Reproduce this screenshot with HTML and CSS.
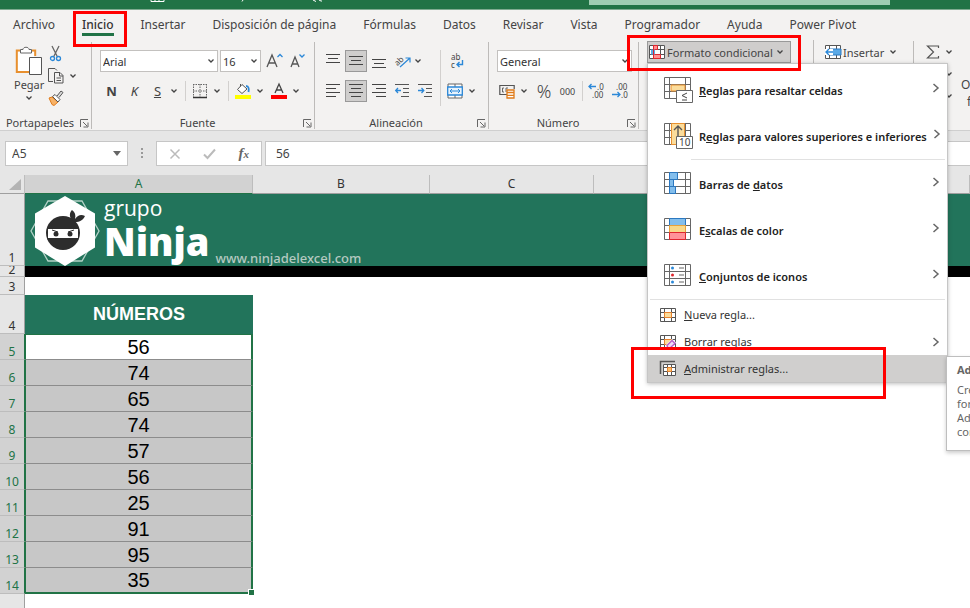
FILE: index.html
```html
<!DOCTYPE html>
<html lang="es">
<head>
    <meta charset="UTF-8">
    <meta name="viewport" content="width=device-width, initial-scale=1.0">
    <title>Administrar reglas - Excel</title>
    <link rel="stylesheet" href="styles.css">
</head>
<body>

<!-- Iconos compartidos -->
<svg class="defs" width="0" height="0">
    <symbol id="chev" viewBox="0 0 10 8"><path d="M2.5 2.5L5 5l2.5-2.5" fill="none" stroke="#444" stroke-width="1.3"/></symbol>
    <symbol id="arrow" viewBox="0 0 8 12"><path d="M1.5 2L6 6l-4.500 4" fill="none" stroke="#666" stroke-width="1.5"/></symbol>
    <symbol id="launch" viewBox="0 0 9 9"><path d="M.5 8V.5H8M3 3l4 4M8 3.500V8H3.500" fill="none" stroke="#666"/></symbol>
    <symbol id="grid-lg" viewBox="0 0 28 22"><path d="M.5.5h26v21H.5zM.5 7.500h26M.5 14.500h26M5.500.5v21M21.500.5v21" fill="none" stroke="#666"/></symbol>
    <symbol id="grid-sm" viewBox="0 0 16 14"><path d="M.5.5h15v13H.5zM.5 4.500h15M.5 9.500h15M4.500.5v13M11.500.5v13" fill="none" stroke="#555"/></symbol>
</svg>

<div class="app">
    <header class="titlebar">
        <svg class="quick" width="340" height="4" viewBox="0 0 340 4"><path d="M11 0v1.500h13V0M15 0v1.500M19 0v1.500M103 0l-1 1.500M173 0l3 1.500M179 0l2 1h1" fill="none" stroke="#fff"/></svg>
        <div class="search"></div>
    </header>

    <nav class="tabs">
        <a href="#">Archivo</a>
        <a href="#" class="active">Inicio</a>
        <a href="#">Insertar</a>
        <a href="#">Disposición de página</a>
        <a href="#">Fórmulas</a>
        <a href="#">Datos</a>
        <a href="#">Revisar</a>
        <a href="#">Vista</a>
        <a href="#">Programador</a>
        <a href="#">Ayuda</a>
        <a href="#">Power Pivot</a>
    </nav>

    <div class="ribbon">
        <!-- Portapapeles -->
        <section class="group clipboard">
            <div class="tools">
                <button class="paste">
                    <svg width="28" height="30" viewBox="0 0 28 30"><path d="M5 4.500H1.800V26H15" fill="none" stroke="#e8902e" stroke-width="2"/><path d="M17 4.500h3.200V10" fill="none" stroke="#e8902e" stroke-width="2"/><path d="M3 6h16v5h-5v14H3z" fill="#fff"/><path d="M5.500 7V3.500H8C8 .5 14 .5 14 3.500h2.500V7z" fill="#fff" stroke="#666"/><path d="M14.500 11.500h12v17h-12z" fill="#fff" stroke="#555"/></svg>
                    <span>Pegar</span>
                    <svg width="10" height="8"><use href="#chev"/></svg>
                </button>
                <div class="small-tools">
                    <button class="cut" aria-label="Cortar"><svg width="16" height="16" viewBox="0 0 16 16"><path d="M4 0l5.500 11M11 0L5.500 11" fill="none" stroke="#666" stroke-width="1.300"/><circle cx="4.500" cy="12.500" r="2" fill="none" stroke="#2b88d8" stroke-width="1.300"/><circle cx="10.500" cy="12.500" r="2" fill="none" stroke="#2b88d8" stroke-width="1.300"/></svg></button>
                    <button aria-label="Copiar"><svg width="16" height="16" viewBox="0 0 16 16"><path d="M5 13.500H.5V.5H7l2 2M6.500 4.500H12l3 3v7.500H6.500zM11.500 4.500V8H15M8.500 10h4.500M8.500 12.500h4.500" fill="none" stroke="#555"/></svg><svg width="10" height="8"><use href="#chev"/></svg></button>
                    <button aria-label="Copiar formato"><svg width="16" height="16" viewBox="0 0 16 16"><path d="M1 8l3-1 6 5-4 3.500-2-1z" fill="#f7b267" stroke="#e07b1a"/><path d="M4.500 6.500L7 4.500l5 5-2 2.500z" fill="#fff" stroke="#555"/><path d="M9 6l4-5 2 1.500-4 5" fill="#ddd" stroke="#555"/></svg></button>
                </div>
            </div>
            <div class="caption"><span>Portapapeles</span><svg width="9" height="9"><use href="#launch"/></svg></div>
        </section>

        <!-- Fuente -->
        <section class="group font">
            <div class="tools rows">
                <div class="row">
                    <div class="combo family"><select aria-label="Fuente"><option>Arial</option></select><svg width="10" height="8"><use href="#chev"/></svg></div>
                    <div class="combo size"><select aria-label="Tamaño"><option>16</option></select><svg width="10" height="8"><use href="#chev"/></svg></div>
                    <button class="icon" aria-label="Aumentar fuente"><svg width="17" height="16" viewBox="0 0 17 16"><path d="M1 14L6 2l5 12M2.800 10h6.500" fill="none" stroke="#555" stroke-width="1.300"/><path d="M11.500 4L14 1.500 16.500 4" fill="none" stroke="#2b88d8" stroke-width="1.300"/></svg></button>
                    <button class="icon" aria-label="Reducir fuente"><svg width="17" height="16" viewBox="0 0 17 16"><path d="M1 14L5 4l4 10M2.300 11h5.500" fill="none" stroke="#555" stroke-width="1.300"/><path d="M9.500 1.500L12 4l2.500-2.500" fill="none" stroke="#2b88d8" stroke-width="1.300"/></svg></button>
                </div>
                <div class="row style-row">
                    <button class="letter"><b>N</b></button>
                    <button class="letter"><i>K</i></button>
                    <button class="letter"><u>S</u></button>
                    <button class="drop" aria-label="Tipo de subrayado"><svg width="10" height="8"><use href="#chev"/></svg></button>
                    <span class="bar"></span>
                    <button class="split" aria-label="Bordes"><svg width="16" height="16" viewBox="0 0 16 16"><path d="M1 1.500h14M1 8h14M1.500 1v13M8 1v13M14.500 1v13" fill="none" stroke="#666" stroke-dasharray="1.500 1"/><path d="M1 14.500h14" stroke="#333" stroke-width="1.500"/></svg><svg width="10" height="8"><use href="#chev"/></svg></button>
                    <span class="bar"></span>
                    <button class="split" aria-label="Color de relleno"><svg width="16" height="16" viewBox="0 0 16 16"><path d="M2.500 6.500L7 1.500l5 4.500-5 4.500z" fill="#fff" stroke="#555"/><path d="M5.500 3.500V1" stroke="#555"/><path d="M11 3c3 0 3 3 2.500 6" fill="none" stroke="#2b88d8" stroke-width="1.800"/><path d="M0 12h16v4H0z" fill="#ff0"/></svg><svg width="10" height="8"><use href="#chev"/></svg></button>
                    <button class="split" aria-label="Color de fuente"><svg width="16" height="16" viewBox="0 0 16 16"><path d="M4 10L8 1l4 9M5.300 7h5.500" fill="none" stroke="#444" stroke-width="1.300"/><path d="M0 12h16v4H0z" fill="#f00"/></svg><svg width="10" height="8"><use href="#chev"/></svg></button>
                </div>
            </div>
            <div class="caption"><span>Fuente</span><svg width="9" height="9"><use href="#launch"/></svg></div>
        </section>

        <!-- Alineación -->
        <section class="group align">
            <div class="tools">
                <div class="rows">
                    <div class="row">
                        <button class="icon" aria-label="Alinear arriba"><svg width="14" height="14" viewBox="0 0 14 14"><path d="M0 .5h14M2 4.500h10M0 8.500h14" stroke="#444"/></svg></button>
                        <button class="icon on" aria-label="Alinear en el medio"><svg width="14" height="14" viewBox="0 0 14 14"><path d="M0 2.500h14M2 6.500h10M0 10.500h14" stroke="#444"/></svg></button>
                        <button class="icon" aria-label="Alinear abajo"><svg width="14" height="14" viewBox="0 0 14 14"><path d="M0 5.500h14M2 9.500h10M0 13.500h14" stroke="#444"/></svg></button>
                        <button class="split orient" aria-label="Orientación"><svg width="17" height="16" viewBox="0 0 17 16"><text x="-1" y="9" transform="rotate(-45 6 7)" class="tiny">ab</text><path d="M5 14L15 5M10.500 5H15v4.500" fill="none" stroke="#2b88d8" stroke-width="1.200"/></svg><svg width="10" height="8"><use href="#chev"/></svg></button>
                    </div>
                    <div class="row">
                        <button class="icon" aria-label="Alinear a la izquierda"><svg width="14" height="14" viewBox="0 0 14 14"><path d="M0 .5h14M0 4.500h10M0 8.500h14M0 12.500h10" stroke="#444"/></svg></button>
                        <button class="icon on" aria-label="Centrar"><svg width="14" height="14" viewBox="0 0 14 14"><path d="M0 .5h14M2 4.500h10M0 8.500h14M2 12.500h10" stroke="#444"/></svg></button>
                        <button class="icon" aria-label="Alinear a la derecha"><svg width="14" height="14" viewBox="0 0 14 14"><path d="M0 .5h14M4 4.500h10M0 8.500h14M4 12.500h10" stroke="#444"/></svg></button>
                        <button class="icon" aria-label="Disminuir sangría"><svg width="14" height="14" viewBox="0 0 14 14"><path d="M0 .5h14M8 4.500h6M8 8.500h6M6 12.500h8" stroke="#555"/><path d="M6 6.500H1M3 4L.700 6.500 3 9" fill="none" stroke="#2b88d8" stroke-width="1.300"/></svg></button>
                        <button class="icon" aria-label="Aumentar sangría"><svg width="14" height="14" viewBox="0 0 14 14"><path d="M0 .5h14M8 4.500h6M8 8.500h6M6 12.500h8" stroke="#555"/><path d="M0 6.500h5.500M3.500 4l2.300 2.500L3.500 9" fill="none" stroke="#2b88d8" stroke-width="1.300"/></svg></button>
                    </div>
                </div>
                <span class="bar tall"></span>
                <div class="rows">
                    <div class="row"><button class="icon" aria-label="Ajustar texto"><svg width="15" height="18" viewBox="0 0 15 18"><text x="2" y="8" class="tiny">ab</text><text x="2" y="16" class="tiny">c</text><path d="M13.500 8v4.500H8M10.500 10L8 12.500l2.500 2.500" fill="none" stroke="#2b88d8" stroke-width="1.400"/></svg></button></div>
                    <div class="row"><button class="split merge" aria-label="Combinar y centrar"><svg width="16" height="16" viewBox="0 0 16 16"><path d="M1 1h14v14H1z" fill="#fff" stroke="#666"/><path d="M8 1v3M8 12v3" stroke="#666"/><path d="M.7 4h14.600v8H.7z" fill="#e8f3fc" stroke="#2b88d8" stroke-width="1.300"/><path d="M3.500 8h9M5 6L3 8l2 2M11 6l2 2-2 2" fill="none" stroke="#2b88d8"/></svg><svg width="10" height="8"><use href="#chev"/></svg></button></div>
                </div>
            </div>
            <div class="caption"><span>Alineación</span><svg width="9" height="9"><use href="#launch"/></svg></div>
        </section>

        <!-- Número -->
        <section class="group number">
            <div class="tools rows">
                <div class="row">
                    <div class="combo format"><select aria-label="Formato de número"><option>General</option></select><svg width="10" height="8"><use href="#chev"/></svg></div>
                </div>
                <div class="row number-row">
                    <button class="split" aria-label="Formato de contabilidad"><svg width="16" height="16" viewBox="0 0 16 16"><path d="M8 11.500H.8V2.500h14.400V6" fill="none" stroke="#555" stroke-width="1.200"/><path d="M5 5H3.500v4H5M9 5H7v4" fill="none" stroke="#666"/><path d="M8 7h7v8H8z" fill="#fff" stroke="#e07b1a" stroke-width="1.300"/><path d="M8 9.500h7M8 12.300h7" stroke="#e07b1a" stroke-width="1.300"/></svg><svg width="10" height="8"><use href="#chev"/></svg></button>
                    <button class="percent">%</button>
                    <button class="zeros">000</button>
                    <span class="bar"></span>
                    <button class="dec" aria-label="Aumentar decimales"><svg width="17" height="18" viewBox="0 0 17 18"><text x="8" y="8" class="tiny">.0</text><text x="3" y="16" class="tiny">.00</text><path d="M7 4.500H0M2.500 2L0 4.500 2.500 7" fill="none" stroke="#2b88d8" stroke-width="1.300"/></svg></button>
                    <button class="dec" aria-label="Disminuir decimales"><svg width="17" height="18" viewBox="0 0 17 18"><text x="4" y="8" class="tiny">.00</text><text x="9" y="16" class="tiny">.0</text><path d="M0 12.500h8M5.500 10L8 12.500 5.500 15" fill="none" stroke="#2b88d8" stroke-width="1.300"/></svg></button>
                </div>
            </div>
            <div class="caption"><span>Número</span><svg width="9" height="9"><use href="#launch"/></svg></div>
        </section>

        <!-- Estilos -->
        <section class="group styles">
            <div class="menu-anchor">
                <button class="cond">
                    <svg width="16" height="14" viewBox="0 0 16 14"><path d="M0 0h16v14H0z" fill="#fff"/><use href="#grid-sm" width="16" height="14"/><path d="M4.500.5h4v4h-4zM4.500 9.500h7v4h-7z" fill="#ff9090" stroke="#e0262e"/><path d="M2 4.500h4v5H2z" fill="#5aa9e6"/><path d="M4.500 0v14" stroke="#e0262e"/></svg>
                    Formato condicional
                    <svg width="10" height="8"><use href="#chev"/></svg>
                </button>

                <div class="menu">
                    <button class="item large">
                        <svg width="29" height="27" viewBox="0 0 29 27"><use href="#grid-lg" width="28" height="22"/><path d="M7 8h14v6H7z" fill="#fbdc9b" stroke="#e8902e"/><path d="M12.500 13.500h16v12h-16z" fill="#fff" stroke="#666"/><path d="M23 16l-5 2.500 5 2.500M18 23h5" fill="none" stroke="#444"/></svg>
                        <span><u>R</u>eglas para resaltar celdas</span>
                        <svg class="more" width="8" height="12"><use href="#arrow"/></svg>
                    </button>
                    <button class="item large">
                        <svg width="29" height="27" viewBox="0 0 29 27"><use href="#grid-lg" width="28" height="22"/><path d="M7.500.5h13v21h-13z" fill="#fbdc9b" stroke="#e8902e"/><path d="M14 14V3M10 7l4-4 4 4" fill="none" stroke="#555" stroke-width="1.400"/><path d="M12.500 13.500h16v12h-16z" fill="#fff" stroke="#666"/><text x="15" y="23" class="ten">10</text></svg>
                        <span>R<u>e</u>glas para valores superiores e inferiores</span>
                        <svg class="more" width="8" height="12"><use href="#arrow"/></svg>
                    </button>
                    <hr class="indent">
                    <button class="item large">
                        <svg width="29" height="27" viewBox="0 0 29 27"><use href="#grid-lg" y="1" width="28" height="22"/><path d="M5.500 1.500h8v7h-8zM5.500 8.500h4v7h-4zM5.500 15.500h6v7h-6z" fill="#83beec" stroke="#2b78c0"/></svg>
                        <span>Barras de <u>d</u>atos</span>
                        <svg class="more" width="8" height="12"><use href="#arrow"/></svg>
                    </button>
                    <button class="item large">
                        <svg width="29" height="27" viewBox="0 0 29 27"><use href="#grid-lg" y="1" width="28" height="22"/><path d="M5.500 1.500h16v7h-16z" fill="#83beec" stroke="#2b78c0"/><path d="M5.500 8.500h16v7h-16z" fill="#f8d889" stroke="#e8a23a"/><path d="M5.500 15.500h16v7h-16z" fill="#ff9298" stroke="#e0262e"/></svg>
                        <span>E<u>s</u>calas de color</span>
                        <svg class="more" width="8" height="12"><use href="#arrow"/></svg>
                    </button>
                    <button class="item large">
                        <svg width="29" height="27" viewBox="0 0 29 27"><use href="#grid-lg" y="1" width="28" height="22"/><circle cx="8.500" cy="5" r="1.500" fill="#2b88d8"/><circle cx="8.500" cy="12" r="1.500" fill="#e0262e"/><circle cx="8.500" cy="19" r="1.500" fill="#2b88d8"/><path d="M15 5h5M15 12h5M15 19h5" stroke="#666"/></svg>
                        <span><u>C</u>onjuntos de iconos</span>
                        <svg class="more" width="8" height="12"><use href="#arrow"/></svg>
                    </button>
                    <hr>
                    <button class="item">
                        <svg width="16" height="14" viewBox="0 0 16 14"><use href="#grid-sm" width="16" height="14"/><path d="M4.500 4.500h7v5h-7z" fill="#fbdc9b" stroke="#e8822e"/></svg>
                        <span><u>N</u>ueva regla...</span>
                    </button>
                    <button class="item">
                        <svg width="16" height="14" viewBox="0 0 16 14"><use href="#grid-sm" width="16" height="14"/><path d="M4.500 4.500h7v5h-7z" fill="#fbdc9b" stroke="#e8822e"/><path d="M6 10l6-6 4 3.500L10 14H7z" fill="#fff"/><path d="M7 10.500l5-5 3 3-5 4.500H8z" fill="#f0dcf8" stroke="#b55fc9" stroke-width="1.400"/></svg>
                        <span><u>B</u>orrar reglas</span>
                        <svg class="more" width="8" height="12"><use href="#arrow"/></svg>
                    </button>
                    <button class="item selected">
                        <svg width="16" height="15" viewBox="0 0 16 15"><path d="M.5 13V.5H15" fill="none" stroke="#555" stroke-width="1.500"/><path d="M3 3h13v12H3z" fill="#fff"/><path d="M3.500 3.500h12v11h-12zM3.500 6.500h12M3.500 10.500h12M7.500 3.500v11M11.500 3.500v11" fill="none" stroke="#555"/><path d="M7.500 6.500h4v4h-4z" fill="#fbc26b" stroke="#e8822e"/></svg>
                        <span><u>A</u>dministrar reglas...</span>
                    </button>

                    <div class="tooltip">
                        <strong>Administrar reglas</strong>
                        <p>Crea, edita, elimina y muestra las reglas de<br>formato condicional del libro con el<br>Administrador de reglas de formato<br>condicional.</p>
                    </div>
                </div>
            </div>
        </section>

        <!-- Celdas -->
        <section class="group cells">
            <button class="label-btn">
                <svg width="16" height="14" viewBox="0 0 16 14"><path d="M0 0h16v14H0z" fill="#fff"/><use href="#grid-sm" width="16" height="14"/><path d="M5 4h11v6H5z" fill="#5aa9e6" stroke="#2b78c0"/><path d="M0 4h8v6H0z" fill="#fff"/><path d="M8 7H1M4 4L1 7l3 3" fill="none" stroke="#2b88d8" stroke-width="1.400"/></svg>
                Insertar
                <svg width="10" height="8"><use href="#chev"/></svg>
            </button>
        </section>

        <!-- Edición -->
        <section class="group edit">
            <div class="edit-tools">
                <button class="split" aria-label="Autosuma"><svg width="14" height="14" viewBox="0 0 14 14"><path d="M12.500 3V1H1.500l6 6-6 6h11v-2" fill="none" stroke="#555" stroke-width="1.200"/></svg><svg width="10" height="8"><use href="#chev"/></svg></button>
                <button class="split" aria-label="Rellenar"><svg width="14" height="14" viewBox="0 0 14 14"><path d="M.5.5h13v13H.5z" fill="none" stroke="#555"/></svg><svg width="10" height="8"><use href="#chev"/></svg></button>
                <button class="split" aria-label="Borrar"><svg width="14" height="14" viewBox="0 0 14 14"><path d="M1 9l7-7 5 4-7 7z" fill="none" stroke="#b55fc9"/></svg><svg width="10" height="8"><use href="#chev"/></svg></button>
            </div>
            <button class="sort">Ordenar y<span>filtrar</span></button>
        </section>
    </div>

    <div class="formula-bar">
        <div class="name-box">
            <input type="text" value="A5" aria-label="Cuadro de nombres">
            <svg width="8" height="5" viewBox="0 0 8 5"><path d="M0 0h8L4 5z" fill="#666"/></svg>
        </div>
        <svg class="dots" width="2" height="11" viewBox="0 0 2 11"><path d="M0 0h2v2H0zM0 4h2v2H0zM0 8h2v2H0z" fill="#999"/></svg>
        <div class="fx-box">
            <button aria-label="Cancelar"><svg width="12" height="12" viewBox="0 0 12 12"><path d="M1.500 1.500l9 9M10.500 1.500l-9 9" stroke="#bbb" stroke-width="1.500"/></svg></button>
            <button aria-label="Introducir"><svg width="13" height="12" viewBox="0 0 13 12"><path d="M1 6.500L4.500 10 12 1.500" fill="none" stroke="#bbb" stroke-width="2"/></svg></button>
            <button class="fx"><i>f<small>x</small></i></button>
        </div>
        <input class="formula" type="text" value="56" aria-label="Barra de fórmulas">
    </div>

    <table class="sheet">
        <colgroup><col class="col-num"><col class="col-a"><col class="col-b"><col class="col-c"><col></colgroup>
        <thead>
            <tr>
                <th class="corner"><svg width="12" height="11" viewBox="0 0 12 11"><path d="M12 0v11H0z" fill="#b4b4b4"/></svg></th>
                <th class="current">A</th><th>B</th><th>C</th><th></th>
            </tr>
        </thead>
        <tbody>
            <tr class="r-banner">
                <th>1</th>
                <td colspan="4">
                    <div class="banner">
                        <svg width="70" height="72" viewBox="0 0 70 72">
                            <path d="M18 6h34l17 30-17 30H18L1 36z" fill="none" stroke="#b5d2c8" stroke-width="1.300"/>
                            <path d="M35 1l30 17.500v34L35 71 5 52.500v-34z" fill="#fff"/>
                            <circle cx="33" cy="38" r="17" fill="#2d2d2d"/>
                            <path d="M41 24c-2-4-1-7 1-9 3 2 4 5 3 9 3-4 6-5 10-3-2 4-5 6-10 6z" fill="#2d2d2d"/>
                            <path d="M18 34h30v9H18z" fill="#fff"/>
                            <circle cx="26" cy="39" r="2.500" fill="#2d2d2d"/>
                            <circle cx="40" cy="39" r="2.500" fill="#2d2d2d"/>
                            <path d="M22 35l6 2M44 35l-6 2" stroke="#2d2d2d"/>
                        </svg>
                        <div class="wordmark"><span>grupo</span><strong>Ninja</strong></div>
                        <span class="url">www.ninjadelexcel.com</span>
                    </div>
                </td>
            </tr>
            <tr class="r-black"><th><div>2</div></th><td colspan="4"></td></tr>
            <tr class="r-gap"><th>3</th><td colspan="4"></td></tr>
            <tr class="r-title"><th>4</th><td>NÚMEROS</td><td colspan="3"></td></tr>
            <tr class="sel first"><th>5</th><td>56</td></tr>
            <tr class="sel"><th>6</th><td>74</td></tr>
            <tr class="sel"><th>7</th><td>65</td></tr>
            <tr class="sel"><th>8</th><td>74</td></tr>
            <tr class="sel"><th>9</th><td>57</td></tr>
            <tr class="sel"><th>10</th><td>56</td></tr>
            <tr class="sel"><th>11</th><td>25</td></tr>
            <tr class="sel"><th>12</th><td>91</td></tr>
            <tr class="sel"><th>13</th><td>95</td></tr>
            <tr class="sel last"><th>14</th><td>35<span class="handle"></span></td></tr>
            <tr class="r-empty"><th></th><td colspan="4"></td></tr>
        </tbody>
    </table>

    <!-- Recuadros rojos -->
    <div class="mark mark-tab"></div>
    <div class="mark mark-button"></div>
    <div class="mark mark-item"></div>
</div>

</body>
</html>
```
FILE: styles.css
```css
* {
    box-sizing: border-box;
}
body {
    margin: 0;
    font-family: "Noto Sans", "Open Sans", sans-serif;
    font-size: 12px;
    color: #444;
    background: #fff;
}
button, input, select {
    font: inherit;
    color: inherit;
    margin: 0;
    padding: 0;
    border: none;
    background: none;
}
svg {
    display: block;
    flex: none;
    overflow: visible;
}
.defs {
    position: absolute;
}
.tiny {
    font-size: 8px;
    fill: #444;
}
.ten {
    font-size: 10px;
    font-weight: 400;
    fill: #444;
}
.app {
    position: relative;
    height: 100vh;
    overflow: hidden;
}

/* Barra de título y pestañas */
.titlebar {
    height: 10px;
    display: flex;
    justify-content: space-between;
    padding: 0 80px 0 140px;
    background: #217346;
    border-bottom: 1px solid #7fab91;
}
.search {
    width: 301px;
    height: 5px;
    background: #9fcdb3;
}
.tabs {
    display: flex;
    gap: 27px;
    height: 30px;
    padding: 5px 13px 0;
    background: #f3f2f1;
    white-space: nowrap;
}
.tabs a {
    height: 21px;
    line-height: 20px;
    color: #444;
    text-decoration: none;
}
.tabs .active {
    color: #333;
    border-bottom: 3px solid #217346;
    font-weight: 500;
}

/* Cinta de opciones */
.ribbon {
    display: flex;
    height: 91px;
    background: #f3f2f1;
    border-bottom: 1px solid #cfcfcf;
}
.group {
    flex: none;
    display: flex;
    flex-direction: column;
    justify-content: space-between;
    margin: 2px 0 1px;
    border-right: 1px solid #bdbbb9;
}
.clipboard { width: 92px; }
.font { width: 223px; }
.align { width: 174px; }
.number { width: 150px; }
.tools {
    display: flex;
    padding: 8px 0 0 8px;
}
.rows {
    display: flex;
    flex-direction: column;
    gap: 8px;
}
.row {
    display: flex;
    align-items: center;
    height: 22px;
}
.caption {
    display: flex;
    align-items: center;
    height: 12px;
    padding-right: 2px;
    font-size: 11px;
    line-height: 12px;
}
.caption span {
    flex: 1;
    text-align: center;
}
.clipboard .tools {
    gap: 4px;
    padding: 4px 0 0 14px;
}
.paste {
    display: flex;
    flex-direction: column;
    align-items: center;
    font-size: 11px;
    line-height: 18px;
}
.small-tools {
    display: flex;
    flex-direction: column;
    gap: 6px;
}
.small-tools button {
    display: flex;
    align-items: center;
    gap: 4px;
}
.combo {
    display: flex;
    align-items: center;
    height: 22px;
    margin-right: 2px;
    padding: 0 1px 0 2px;
    background: #fff;
    border: 1px solid #c3c1bf;
}
.combo select {
    flex: 1;
    min-width: 0;
    appearance: none;
    font-size: 11px;
    color: #333;
}
.family { width: 118px; }
.size { width: 41px; }
.format { width: 135px; }
.icon {
    display: flex;
    align-items: center;
    justify-content: center;
    width: 22px;
    height: 22px;
}
.font .icon {
    margin-right: 2px;
}
.on {
    background: #cfcecd;
    border: 1px solid #999;
}
.letter {
    width: 23px;
    font-size: 13px;
    line-height: 16px;
}
.letter b {
    font-weight: 700;
}
.split {
    display: flex;
    align-items: center;
    gap: 4px;
}
.split + .split {
    margin-left: 6px;
}
.bar {
    width: 1px;
    height: 20px;
    margin: 0 6px;
    background: #d2d0ce;
}
.tall {
    height: 56px;
    margin: 0 4px;
}
.align .row {
    gap: 1px;
}
.align .tools {
    padding-left: 7px;
}
.orient {
    gap: 1px;
    padding-left: 4px;
}
.merge {
    padding-left: 2px;
}
.number-row {
    padding-left: 2px;
}
.percent {
    width: 30px;
    font-size: 18px;
    font-weight: 300;
    line-height: 20px;
}
.zeros {
    width: 17px;
    font-size: 9px;
}
.dec {
    margin-right: 6px;
}
.styles {
    width: 175px;
    margin-top: 0;
    padding: 1px 0 0 8px;
}
.cond, .label-btn {
    display: flex;
    align-items: center;
    gap: 2px;
    height: 22px;
    white-space: nowrap;
    font-size: 11px;
}
.cond {
    width: 144px;
    justify-content: space-between;
    padding: 0 5px 0 1px;
    background: #cfcdcc;
    border: 1px solid #999;
}
.cells {
    width: 100px;
    margin-top: 1px;
    padding-left: 11px;
}
.label-btn svg:last-child {
    margin-left: 2px;
}
.edit {
    flex-direction: row;
    justify-content: flex-start;
    gap: 7px;
    padding-left: 12px;
    border-right: none;
}
.edit-tools {
    display: flex;
    flex-direction: column;
    gap: 8px;
    padding-top: 3px;
}
.edit-tools .split {
    margin-left: 0;
}
.sort {
    align-self: center;
    padding-top: 14px;
    font-size: 12px;
    line-height: 17px;
    text-align: left;
    white-space: nowrap;
}
.sort span {
    display: block;
    padding-left: 6px;
}

/* Menú de formato condicional */
.menu-anchor {
    position: relative;
}
.menu {
    position: absolute;
    z-index: 5;
    top: 22px;
    left: 0;
    width: 301px;
    padding-top: 3px;
    background: #fff;
    border: 1px solid #c6c6c6;
    box-shadow: 0 1px 4px rgba(0, 0, 0, 0.25);
}
.item {
    display: flex;
    align-items: center;
    gap: 8px;
    width: 100%;
    height: 27px;
    padding: 0 7px 0 12px;
    font-size: 11px;
    text-align: left;
    white-space: nowrap;
    color: #333;
}
.item span {
    flex: 1;
}
.large {
    gap: 6px;
    height: 46px;
    padding-left: 16px;
    font-weight: 600;
    color: #222;
}
.large .more {
    margin-bottom: 4px;
}
.selected {
    background: #d0cfce;
}
.menu hr {
    height: 1px;
    margin: 0 2px 1px;
    border: none;
    background: #e1e1e1;
}
.menu .indent {
    margin-left: 43px;
}
.tooltip {
    position: absolute;
    top: 292px;
    left: 298px;
    width: 260px;
    height: 95px;
    padding: 6px 10px;
    font-size: 11px;
    line-height: 14px;
    color: #666;
    background: #fff;
    border: 1px solid #bebebe;
    box-shadow: 0 2px 4px rgba(0, 0, 0, 0.2);
}
.tooltip p {
    margin: 6px 0 0;
}

/* Barra de fórmulas */
.formula-bar {
    display: flex;
    height: 44px;
    padding: 10px 0 9px 5px;
    background: #e6e6e6;
}
.name-box, .fx-box, .formula {
    height: 25px;
    background: #fff;
    border: 1px solid #c6c6c6;
}
.name-box {
    display: flex;
    align-items: center;
    width: 123px;
    padding: 0 6px;
}
.name-box input {
    flex: 1;
    min-width: 0;
}
.dots {
    align-self: center;
    margin: 0 13px;
}
.fx-box {
    display: flex;
    align-items: center;
    justify-content: space-between;
    width: 106px;
    margin-right: 3px;
    padding: 0 12px;
}
.fx {
    font-family: "Liberation Serif", serif;
    font-size: 15px;
    font-weight: bold;
    line-height: 16px;
    color: #666;
}
.fx small {
    font-size: 11px;
}
.formula {
    flex: 1;
    padding-left: 10px;
    border-right: none;
}

/* Hoja */
.sheet {
    width: 100%;
    table-layout: fixed;
    border-collapse: separate;
    border-spacing: 0;
}
.col-num { width: 25px; }
.col-a { width: 228px; }
.col-b { width: 177px; }
.col-c { width: 164px; }
.sheet th, .sheet td {
    padding: 0;
}
.sheet th {
    font-weight: 400;
    color: #333;
    background: #e6e6e6;
}
.sheet thead th {
    height: 19px;
    line-height: 18px;
    border-right: 1px solid #bdbdbd;
    border-bottom: 1px solid #9f9f9f;
}
.sheet thead .current {
    color: #217346;
    background: #d2d2d2;
    border-bottom: 1px solid #217346;
}
.corner svg {
    margin-left: 9px;
}
.sheet tbody th {
    line-height: 14px;
    vertical-align: bottom;
    border-right: 1px solid #9f9f9f;
    border-bottom: 1px solid #bdbdbd;
}
.r-banner td {
    height: 72px;
    background: #22745b;
}
.banner {
    display: flex;
    height: 71px;
    padding-left: 5px;
    gap: 4px;
    font-family: "Open Sans", sans-serif;
    color: #fff;
}
.wordmark {
    display: flex;
    flex-direction: column;
}
.wordmark span {
    font-size: 21px;
    line-height: 26px;
}
.wordmark strong {
    font-size: 38px;
    font-weight: 800;
    line-height: 40px;
}
.url {
    align-self: flex-end;
    margin-left: 2px;
    font-family: "Noto Sans", sans-serif;
    font-size: 13px;
    font-weight: 500;
    line-height: 16px;
    color: #b5c9c1;
}
.r-black td {
    height: 11px;
    background: #000;
}
.r-black div {
    display: flex;
    align-items: flex-end;
    justify-content: center;
    height: 10px;
    overflow: hidden;
    line-height: 13px;
}
.r-gap td {
    height: 18px;
}
.r-title td {
    height: 39px;
}
.r-title td:nth-child(2) {
    font-family: "Liberation Sans", Arial, sans-serif;
    font-size: 18px;
    font-weight: 700;
    text-align: center;
    color: #fff;
    background: #22745b;
}
.sel th {
    color: #217346;
    background: #d2d2d2;
}
.sel td {
    position: relative;
    height: 26px;
    font-family: "Liberation Sans", Arial, sans-serif;
    font-size: 20px;
    line-height: 24px;
    text-align: center;
    color: #000;
    background: #c7c7c7;
    border-left: 1px solid #217346;
    border-right: 2px solid #217346;
    border-bottom: 1px solid #8c8c8c;
}
.sheet .sel th {
    color: #217346;
    background: #d2d2d2;
    border-right: 1px solid #217346;
}
.first td {
    background: #fff;
    border-top: 1px solid #217346;
}
.last td {
    border-bottom: 2px solid #217346;
}
.handle {
    position: absolute;
    right: -3px;
    bottom: -3px;
    width: 6px;
    height: 6px;
    background: #217346;
    border: 1px solid #fff;
    border-width: 1px 0 0 1px;
}
.r-empty td {
    height: 26px;
}

/* Recuadros rojos */
.mark {
    position: absolute;
    z-index: 10;
    border: 3px solid #f00;
    pointer-events: none;
}
.mark-tab {
    top: 11px;
    left: 73px;
    width: 54px;
    height: 36px;
}
.mark-button {
    top: 35px;
    left: 627px;
    width: 174px;
    height: 36px;
}
.mark-item {
    top: 347px;
    left: 631px;
    width: 255px;
    height: 52px;
}
```
